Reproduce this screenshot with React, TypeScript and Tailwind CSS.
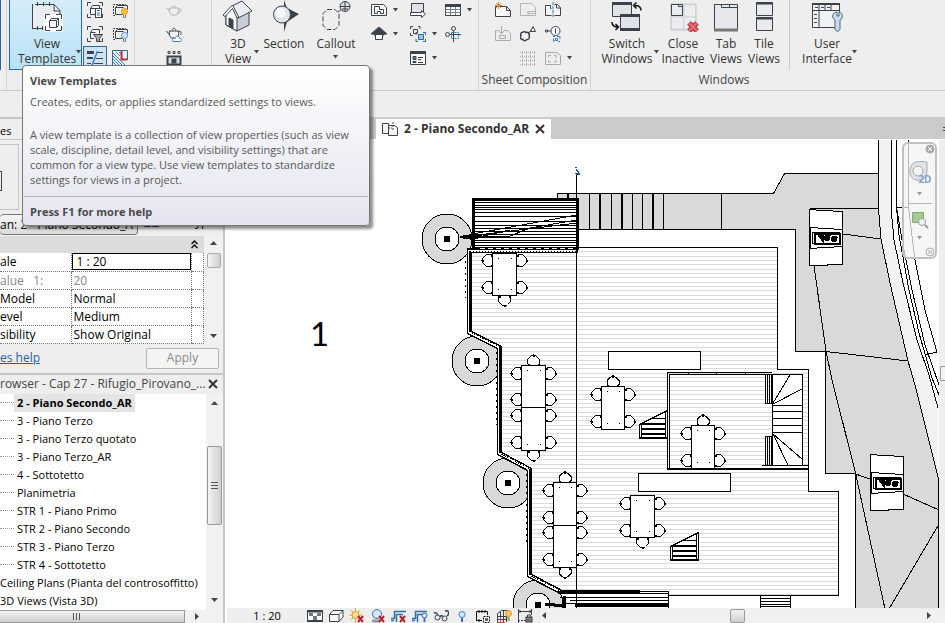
import type { ReactNode } from "react";

const INK = "#3b424c";

type IconProps = { children: ReactNode; size?: number };

function Icon({ children, size = 16 }: IconProps) {
  return (
    <svg width={size} height={size} viewBox={`0 0 ${size} ${size}`} fill="none" stroke={INK} className="shrink-0" aria-hidden="true">
      {children}
    </svg>
  );
}

function Arrow({ className = "", color = "#444" }: { className?: string; color?: string }) {
  return (
    <svg width="5" height="4" viewBox="0 0 5 4" className={`shrink-0 ${className}`} aria-hidden="true">
      <path d="M0 0h5L2.500 3.500z" fill={color} />
    </svg>
  );
}

/* ---------- ribbon icons ---------- */

const frame = <path d="M.5 4V.5H4M12 .5h3.500V4M15.500 12v3.500H12M4 15.500H.5V12" />;

const icons = {
  visibility: (
    <Icon>
      {frame}
      <path d="M8 12.500H3.500v-6l2-3h7v3M3.500 6.500h5" fill="#f4f4f4" />
      <rect x="8.500" y="6.500" width="6" height="9" fill="#fff" />
      <path d="M10 8.500h3M10 11h3M10 13h3" stroke="#2b6a9b" />
    </Icon>
  ),
  bulbOn: (
    <Icon>
      <path d="M3 13.500H1.500V2.500h12V5" strokeDasharray="2 1" />
      <path d="M3.500 12.500V5.500l2-2h10v4M3.500 5.500h8M3.500 12.500h7" fill="#f2f2f2" />
      <circle cx="12.500" cy="9.500" r="3" fill="#fbbf3c" stroke="#e19a23" />
      <path d="M11.500 13v3h2v-3" stroke="#8a7350" />
    </Icon>
  ),
  filter: (
    <Icon>
      {frame}
      <path d="M7 12.500H3.500v-6l2-3h7v4M3.500 6.500h5" fill="#f4f4f4" />
      <path d="M6.500 8.500h9l-3 4v3h-3v-3z" fill="#aaa" />
    </Icon>
  ),
  bulbOff: (
    <Icon>
      <path d="M3 13.500H1.500V2.500h12V5" strokeDasharray="2 1" />
      <path d="M3.500 12.500V5.500l2-2h10v4M3.500 5.500h8M3.500 12.500h7" fill="#f2f2f2" />
      <circle cx="12.500" cy="9.500" r="3" fill="#cfe6fa" stroke="#5c92c2" />
      <path d="M11.500 13v3h2v-3" stroke="#6b7c8c" />
    </Icon>
  ),
  thinLines: (
    <Icon>
      <path d="M0 2.500h7" strokeWidth="3" />
      <path d="M0 8h6" strokeWidth="2" />
      <path d="M0 13.500h4M10 2.500h6M9 8.500h7M7 13.500h9" />
      <path d="M10.500 1 5 15.500" stroke="#2f7fd0" strokeWidth="1.500" />
    </Icon>
  ),
  hidden: (
    <Icon>
      <path d="M.5 15.500V.5H15.500V10" stroke="#2c6797" />
      <path d="m1 3 12 12M1 6l9 9M1 9l6 6M1 12l3 3M4 2l4 4M7 2l2 2" stroke="#3282c8" />
      <path d="M9.500 1v8.500H15" stroke="#b53040" strokeWidth="2" />
    </Icon>
  ),
  teapot: (
    <Icon>
      <path d="M3.500 6h9c1 4-1 6-2 7h-5c-1-1-3-3-2-7zM3.500 8 .5 6M12.500 8c4-3 3 3-1 3M6 5.500c1-2 3-2 4 0" stroke="#b0b0b0" />
    </Icon>
  ),
  teapotCloud: (
    <Icon>
      <path d="M3.500 5h9c1 4-1 6-2 7h-5c-1-1-3-3-2-7zM3.500 9 .5 5M12.500 6c3-2 3 1 2 3M6 4.500c1-3 3-3 4 0" fill="#f4f4f4" />
      <path d="M7 15.500c-2-3 1-4 2-3 1-4 5-2 4.500 0 3 0 2 3 1 3z" fill="#fff" stroke="#4276b0" />
    </Icon>
  ),
  gallery: (
    <Icon>
      <path d="M2 1.500h2v2H2zM7 1.500h2v2H7zM12 1.500h2v2h-2z" />
      <path d="M1.500 6.500h13v8h-13z" fill="#d8dadd" strokeWidth="2" />
      <rect x="6" y="9" width="4" height="4" fill="#3b424c" />
    </Icon>
  ),
  planViews: (
    <Icon>
      <path d="M.5 2.500h12l3 3v8H.5z" fill="#fafafa" />
      <path d="M3.500 4.500h5v3h4v4h-3v-2h-3v2h-3z" />
    </Icon>
  ),
  elevation: (
    <Icon>
      <path d="M8 1 0 8h3v1h10V8h3z" fill={INK} />
      <path d="M4.500 8.500h7v5h-7z" fill="#f4f4f4" />
    </Icon>
  ),
  drafting: (
    <Icon>
      <path d="M1.500 1.500h12v9h-12z" fill="#dfe2e7" />
      <path d="M.5 10.500h11v-2l4 3.500-4 3.500v-2H.5z" fill="#fff" />
    </Icon>
  ),
  duplicate: (
    <Icon>
      <path d="M.5 3V.5H3M8 .5h2V3M.5 7v2.500H3" />
      <path d="M3.500 3.500h4v4h-4z" />
      <path d="M6 9V6.500h2M13 6.500h2.500V9M15.500 13v2.500H13M8 15.500H6V13" stroke="#2c6797" />
      <path d="M8.500 8.500h5v5h-5z" fill="#8fc8f2" stroke="#2c6797" />
    </Icon>
  ),
  legend: (
    <Icon>
      <path d="M.5 1.500h15v13H.5z" fill="#f7f7f7" />
      <path d="M.5 2.500h15" strokeWidth="3" />
      <path d="M3 6.500h3v3H3zM3 11.500h3v1H3z" fill="#71808e" />
      <path d="M8 7.500h5M8 9.500h3M8 12.500h5" />
    </Icon>
  ),
  schedule: (
    <Icon>
      <path d="M.5 2.500h15v11H.5z" fill="#fff" />
      <path d="M0 3.500h16" strokeWidth="3" />
      <path d="M.5 7.500h15M.5 10.500h15M5.500 5v8M10.500 5v8" stroke="#78828e" />
    </Icon>
  ),
  scopeBox: (
    <Icon>
      <circle cx="8.500" cy="2.500" r="2" />
      <circle cx="2.500" cy="8.500" r="2" />
      <path d="M5 8.500h11M8.500 5v11" />
      <path d="M6.500 6.500h7v6h-7z" stroke="#2f7fc0" strokeDasharray="2 1" />
    </Icon>
  ),
  sheet: (
    <Icon>
      <path d="M.5 14.500v-10h11l4 4v6z" fill="#f7f7f7" />
      <path d="M11.500 4.500v4h4" />
      <path d="M3.500 0v7M0 3.500h7M1 1l5 5M6 1 1 6" stroke="#e08a2c" />
    </Icon>
  ),
  titleBlock: (
    <Icon>
      <path d="M.5 13.500v-12h11l4 4v8zM8 9.500h7M8 11.500h7M8 9v4" stroke="#b4b4b4" />
    </Icon>
  ),
  matchline: (
    <Icon>
      <path d="M6.500 13.500h-6v-10h5v3h1M9.500 13.500h6v-8l-3-3h-3" fill="#f7f7f7" />
      <path d="M11.500 3v3h4" />
      <path d="M8 0v16" stroke="#2f7fc0" strokeDasharray="3 1" />
    </Icon>
  ),
  view: (
    <Icon>
      <path d="M4 4.500H.5v10h15v-7l-3-3H9M6.500 0v7M4 5l2.500 3L9 5M4.500 9.500h6v3h-6z" stroke="#acacac" />
    </Icon>
  ),
  revisions: (
    <Icon>
      <path d="M2 6.500c2-1 3-1 4 0 2-1 4 1 3 3 1 2 0 4-2 4-2 2-4 1-4 0-3 0-3-3-2-4-1-1 0-3 1-3z" fill="#f4f4f4" strokeWidth="1.500" />
      <path d="m8 8 3-4M10.500 5.500 13 .5l2.500 5z" />
    </Icon>
  ),
  viewReference: (
    <Icon>
      <circle cx="10.500" cy="5" r="4.500" fill="#fff" />
      <path d="M10.500 2.500v5M5.500 5H3M.5 4h2v2h-2z" />
      <path d="M8 10.500h2M12 10.500h3V13M8.500 12.500V15H10M13 15.500h2M10.500 12.500h2v2h-2z" stroke="#2f7fc0" />
    </Icon>
  ),
  guideGrid: (
    <Icon>
      <path d="M0 2.500h16M0 6.500h16M0 10.500h16M0 14.500h16M2.500 1v15M6.500 1v15M10.500 1v15M14.500 1v15" stroke="#b0b0b0" strokeDasharray="1 1" />
    </Icon>
  ),
  viewports: (
    <Icon>
      <path d="M.5 14.500v-12h11l4 3v9zM3.500 7V5.500H6M9 5.500h2V8M11 10v2H9M6 12H3.500v-2" stroke="#a8a8a8" />
    </Icon>
  ),
};

const bigIcons = {
  template: (
    <Icon size={32}>
      <path d="M2 4.500h21l6 6V29H2z" fill="#e9ecf1" stroke="none" />
      <path d="M1.500 4v24.500M4 4.500h19l6 6V16M23 4.500V11h6M1 28.500h11M6.500 2v4M12.500 2v4M18.500 2v4M6.500 26v4M11.500 26v4" />
      <rect x="13" y="14" width="19" height="18" fill="#fff" stroke="none" />
      <path d="M14.500 19v-4.500H19M25 14.500h5.500V19M30.500 26v4.500H25M19 30.500h-4.500V26" />
      <path d="M18.500 27.500v-7l2-2h7v7l-2 2zM18.500 20.500h7v7M25.500 20.500l2-2" fill="#f4f4f4" />
    </Icon>
  ),
  house: (
    <Icon size={32}>
      <path d="M4 14v11l11 6 12-6V13L18 4z" fill="#c9ced6" />
      <path d="m4 14 6-8 5 10v15L4 25z" fill="#fafafa" />
      <path d="M10 6 20 1l10 10-14 7z" fill="#e9ecf0" />
      <path d="M10.500 5 1 15l2 1.500 7.500-8 4.500 9.500 2-.5z" fill="#fff" />
      <path d="M7 18v8.500l4 2V20z" fill={INK} />
    </Icon>
  ),
  section: (
    <Icon size={32}>
      <path d="M16 0v32l3-10 12-8L19 8z" fill={INK} stroke="none" />
      <circle cx="14" cy="14.500" r="8.500" fill="#e0e3e8" />
      <circle cx="12.500" cy="13" r="5" fill="#f7f8fa" stroke="none" />
    </Icon>
  ),
  callout: (
    <Icon size={32}>
      <path d="M7 9.500h8l4 4v12l-4 4H7l-4-4v-12z" strokeDasharray="5 2" />
      <path d="m18 12 4-3" />
      <circle cx="25" cy="6.500" r="5" fill="#ddd" />
      <path d="M20 6.500h10M25 2v9M22 9h6" />
    </Icon>
  ),
  switchWindows: (
    <Icon size={32}>
      <path d="M1.500 2.500h19v14h-19z" fill="#e0e4e9" />
      <path d="M1 3.500h20" strokeWidth="3" />
      <path d="M9.500 14.500h19v15h-19z" fill="#e0e4e9" />
      <path d="M9 15.500h20M9 29.500h20" strokeWidth="3" />
      <path d="M30 10.500c0-4-2-5-6-5M25.500 2.500 22.500 5.500l3 3M1 22c0 4 2 5 6 5M4.500 24l3 3-3 3" stroke="#111" strokeWidth="1.500" />
    </Icon>
  ),
  closeInactive: (
    <Icon size={32}>
      <path d="M4 4h25v26H4z" fill="#d9dce1" stroke="#c3c6cb" />
      <path d="M6 18.500h9v9H6zM18.500 6h9v9h-9zM18.500 18.500h9v9h-9z" fill="#e9ebee" stroke="#f4f4f4" />
      <path d="M4.500 4.500h11v11h-11z" fill="#e9ebee" />
      <path d="M11.500 4.500v2h4" />
      <path d="m22 23 8 8M30 23l-8 8" stroke="#963038" strokeWidth="5" />
      <path d="m22 23 8 8M30 23l-8 8" stroke="#f0666a" strokeWidth="3" />
    </Icon>
  ),
  tabViews: (
    <Icon size={32}>
      <path d="M4.500 4.500h23v26h-23z" fill="#e6e8ed" />
      <path d="M4 30h24" strokeWidth="3" stroke="#777" />
      <path d="M11.500 4v3.500h16M19.500 4v3" />
    </Icon>
  ),
  tileViews: (
    <Icon size={32}>
      <path d="M8.500 2.500h16v13h-16zM8.500 17.500h16v13h-16z" fill="#e9ebef" />
      <path d="M8 3.500h17M8 18.500h17" strokeWidth="2" />
    </Icon>
  ),
  userInterface: (
    <Icon size={32}>
      <path d="M1.500 3.500h27v24h-27z" fill="#f1f2f5" />
      <path d="M1 4h28" strokeWidth="2" />
      <path d="M2 10.500h26M2 27.500h27M8 5v22M14 5v5M20 5v5M4 7.500h3M10 7.500h3M16 7.500h3M3 14.500h3M3 18.500h3M3 22.500h3" />
      <path d="M26 14v-2c-4 0-5 4-4 6l2 2v9c1 3 4 3 5 0v-9l2-2c1-2 0-6-3-6v4h-2z" fill="#c8dcee" stroke="#4e6478" />
    </Icon>
  ),
};

type Tool = { label: string; icon: keyof typeof icons; menu?: boolean; active?: boolean };

function SmallTool({ label, icon, menu, active }: Tool) {
  return (
    <button
      type="button"
      aria-label={label}
      className={`flex h-6 items-center gap-1.5 ${
        active ? "w-6 justify-center border border-[#2c6797] bg-[#cce4f5]" : "px-1"
      }`}
    >
      {icons[icon]}
      {menu && <Arrow />}
    </button>
  );
}

type BigToolProps = {
  lines: string[];
  icon: keyof typeof bigIcons;
  width: string;
  side?: boolean;
  below?: boolean;
};

function BigTool({ lines, icon, width, side, below }: BigToolProps) {
  return (
    <button type="button" className="flex h-[70px] shrink-0 text-[12px] leading-[15px] text-[#333]">
      <span className={`flex flex-col items-center ${width}`}>
        {bigIcons[icon]}
        <span className="mt-1 flex flex-col items-center whitespace-nowrap">
          {lines.map((line) => (
            <span key={line}>{line}</span>
          ))}
          {below && <Arrow className="mt-1" />}
        </span>
      </span>
      {side && <Arrow className="mt-[50px]" />}
    </button>
  );
}

const graphicsTools: Tool[] = [
  { label: "Visibility/Graphics", icon: "visibility" },
  { label: "Show Hidden Lines", icon: "bulbOn" },
  { label: "Filters", icon: "filter" },
  { label: "Remove Hidden Lines", icon: "bulbOff" },
  { label: "Thin Lines", icon: "thinLines", active: true },
  { label: "Cut Profile", icon: "hidden" },
];

const renderTools: Tool[] = [
  { label: "Render", icon: "teapot" },
  { label: "Render in Cloud", icon: "teapotCloud" },
  { label: "Render Gallery", icon: "gallery" },
];

const createTools: Tool[][] = [
  [
    { label: "Plan Views", icon: "planViews", menu: true },
    { label: "Elevation", icon: "elevation", menu: true },
  ],
  [
    { label: "Drafting View", icon: "drafting" },
    { label: "Duplicate View", icon: "duplicate", menu: true },
    { label: "Legends", icon: "legend", menu: true },
  ],
  [
    { label: "Schedules", icon: "schedule", menu: true },
    { label: "Scope Box", icon: "scopeBox" },
  ],
];

const sheetTools: Tool[][] = [
  [
    { label: "Sheet", icon: "sheet" },
    { label: "View", icon: "view" },
  ],
  [
    { label: "Title Block", icon: "titleBlock" },
    { label: "Revisions", icon: "revisions" },
    { label: "Guide Grid", icon: "guideGrid" },
  ],
  [
    { label: "Matchline", icon: "matchline" },
    { label: "View Reference", icon: "viewReference" },
    { label: "Viewports", icon: "viewports", menu: true },
  ],
];

function Ribbon() {
  return (
    <header className="flex h-[91px] shrink-0 overflow-hidden border-b border-[#cbcbcb] bg-[#eeeeee]">
      <div className="w-[7px] shrink-0 border-r border-[#d6d6d6]">
        <div className="h-[70px] w-px bg-[#2c6797]" />
      </div>
      <div className="flex w-[128px] shrink-0 border-r border-[#d6d6d6] pl-0.5">
        <div className="mr-px flex h-[70px] w-[73px] shrink-0 border border-t-0 border-[#2c6797] bg-linear-to-b from-[#d5edf9] to-[#b9e2f6]">
          <BigTool lines={["View", "Templates"]} icon="template" width="w-[66px] pl-2" side />
        </div>
        <div className="-mt-0.5 grid h-[72px] grid-cols-2 gap-x-px">
          {graphicsTools.map((tool) => (
            <SmallTool key={tool.label} {...tool} />
          ))}
        </div>
      </div>
      <div className="w-[77px] shrink-0 border-r border-[#d6d6d6] pl-[27px]">
        <div className="-mt-0.5">
          {renderTools.map((tool) => (
            <SmallTool key={tool.label} {...tool} />
          ))}
        </div>
      </div>
      <div className="flex w-[267px] shrink-0 border-r border-[#d6d6d6] pl-2.5">
        <BigTool lines={["3D", "View"]} icon="house" width="w-8" side />
        <BigTool lines={["Section"]} icon="section" width="w-[50px]" />
        <BigTool lines={["Callout"]} icon="callout" width="w-[54px]" below />
        <div className="-mt-0.5 ml-1 grid grid-cols-[39px_35px_35px] items-start">
          {createTools.map((column) => (
            <div key={column[0].label}>
              {column.map((tool) => (
                <SmallTool key={tool.label} {...tool} />
              ))}
            </div>
          ))}
        </div>
      </div>
      <div className="flex w-[112px] shrink-0 flex-col items-center border-r border-[#d6d6d6]">
        <div className="-mt-0.5 grid h-[74px] w-[88px] grid-cols-[25px_25px_38px] items-start">
          {sheetTools.map((column) => (
            <div key={column[0].label}>
              {column.map((tool) => (
                <SmallTool key={tool.label} {...tool} />
              ))}
            </div>
          ))}
        </div>
        <span className="whitespace-nowrap text-[12px] leading-4 text-[#444]">Sheet Composition</span>
      </div>
      <div className="flex shrink-0 flex-col items-center">
        <div className="flex h-[72px] pl-[9px]">
          <BigTool lines={["Switch", "Windows"]} icon="switchWindows" width="w-[54px]" side />
          <BigTool lines={["Close", "Inactive"]} icon="closeInactive" width="w-12" />
          <BigTool lines={["Tab", "Views"]} icon="tabViews" width="w-[38px]" />
          <BigTool lines={["Tile", "Views"]} icon="tileViews" width="w-[38px]" />
          <div className="mx-1.5 h-[70px] border-l border-[#cbcbcb]" />
          <div className="pl-1.5">
            <BigTool lines={["User", "Interface"]} icon="userInterface" width="w-[50px]" side />
          </div>
        </div>
        <span className="text-[12px] leading-4 text-[#444]">Windows</span>
      </div>
    </header>
  );
}

function Tooltip() {
  return (
    <div
      role="tooltip"
      className="absolute left-[22px] top-[65px] z-20 w-[348px] rounded-sm border border-[#767676] bg-linear-to-b from-white to-[#e4e5f0] text-[11px] leading-[15px] text-[#575757] shadow-[3px_3px_3px_rgba(0,0,0,0.45)]"
    >
      <div className="px-[7px] pt-[7px]">
        <p className="font-bold text-[#4a4a4a]">View Templates</p>
        <p className="mt-1.5">Creates, edits, or applies standardized settings to views.</p>
        <p className="mt-[18px] whitespace-nowrap">
          A view template is a collection of view properties (such as view
          <br />
          scale, discipline, detail level, and visibility settings) that are
          <br />
          common for a view type. Use view templates to standardize
          <br />
          settings for views in a project.
        </p>
      </div>
      <p className="mx-px mt-[9px] border-t border-[#b5b5bb] px-1.5 pb-[6px] pt-[7px] font-bold text-[#4a4a4a]">
        Press F1 for more help
      </p>
    </div>
  );
}

/* ---------- sidebar ---------- */

const properties = [
  { name: "ale", value: "1 : 20", editing: true },
  { name: "alue   1:", value: "20", muted: true },
  { name: "Model", value: "Normal" },
  { name: "evel", value: "Medium" },
  { name: "sibility", value: "Show Original" },
];

const views = [
  "2 - Piano Secondo_AR",
  "3 - Piano Terzo",
  "3 - Piano Terzo quotato",
  "3 - Piano Terzo_AR",
  "4 - Sottotetto",
  "Planimetria",
  "STR 1 - Piano Primo",
  "STR 2 - Piano Secondo",
  "STR 3 - Piano Terzo",
  "STR 4 - Sottotetto",
];

function Caret({ dir }: { dir: "up" | "down" | "left" | "right" }) {
  const paths = {
    up: "M0 5h7L3.500 1z",
    down: "M0 1h7L3.500 5z",
    left: "M5 0v7L1 3.500z",
    right: "M1 0v7l4-3.500z",
  };
  return (
    <svg width="7" height="7" viewBox="0 0 7 7" className="shrink-0" aria-hidden="true">
      <path d={paths[dir]} fill="#444" />
    </svg>
  );
}

function CloseX() {
  return (
    <svg width="10" height="10" viewBox="0 0 10 10" aria-hidden="true">
      <path d="m1 1 8 8M9 1 1 9" stroke="#333" strokeWidth="2" />
    </svg>
  );
}

function Properties() {
  return (
    <section className="shrink-0 border-b-2 border-[#c6c6c6]">
      <h2 className="h-[22px] border-t-2 border-[#c6c6c6] pt-1 text-[11px] leading-[15px]">es</h2>
      <div className="flex h-[75px] border-t border-[#c6c6c6] pr-[204px] pt-1">
        <div className="flex h-[66px] flex-1 items-center border border-l-0 border-[#c6c6c6]">
          <div className="mt-2 h-5 w-0.5 border border-l-0 border-[#444]" />
        </div>
      </div>
      <div className="flex h-[22px] items-start text-[12px] leading-4">
        <button type="button" className="flex h-[21px] w-[138px] items-center overflow-hidden whitespace-nowrap rounded-sm border border-l-0 border-[#777] bg-linear-to-b from-[#f4f4f4] to-[#dcdcdc]">
          an: 2 - Piano Secondo_A
        </button>
        <button type="button" className="ml-1.5 flex items-start gap-1 whitespace-nowrap">
          <Icon>
            <path d="M.5 3.500h6v9h-6zM8.500 6.500h6v6h-6z" fill="#fff" />
          </Icon>
          Edit Type
        </button>
      </div>
      <div className="flex">
        <div className="flex-1">
          <div className="flex h-[17px] items-center justify-end bg-[#dcdcdc] pr-1.5">
            <svg width="7" height="9" viewBox="0 0 7 9" fill="none" stroke="#111" strokeWidth="1.500" aria-hidden="true">
              <path d="m.5 4 3-3 3 3M.5 8l3-3 3 3" />
            </svg>
          </div>
          <table className="w-full table-fixed border-collapse bg-white text-[12px] leading-[17px]">
            <tbody>
              {properties.map((row) => (
                <tr key={row.name} className={`h-[18px] ${row.muted ? "text-[#888]" : "text-black"}`}>
                  <th scope="row" className="w-[71px] overflow-hidden whitespace-pre border-b border-r border-dotted border-[#777] p-0 text-left font-normal">
                    {row.name}
                  </th>
                  <td className="whitespace-nowrap border-b border-dotted border-[#777] p-0">
                    {row.editing ? (
                      <input aria-label="View scale" defaultValue={row.value} className="block h-[17px] w-full border border-black bg-white pl-1 outline-none" />
                    ) : (
                      <span className="pl-0.5">{row.value}</span>
                    )}
                  </td>
                  <td className="w-3 border-x border-b border-dotted border-[#777] p-0" />
                </tr>
              ))}
            </tbody>
          </table>
        </div>
        <div className="flex w-[19px] flex-col items-center bg-[#f1f1f1] py-1">
          <Caret dir="up" />
          <div className="mt-1.5 h-[15px] w-[14px] rounded-xs border border-[#aaa] bg-linear-to-r from-[#f4f4f4] to-[#cfcfcf]" />
          <div className="flex-1" />
          <Caret dir="down" />
        </div>
      </div>
      <div className="flex h-[29px] items-center justify-between pr-1 text-[12px]">
        <a href="#help" className="text-[#2560a8] underline">
          es help
        </a>
        <button type="button" className="h-[21px] w-[73px] rounded-xs border border-[#b4b4b4] bg-[#f4f4f4] text-[#8b8b8b]">
          Apply
        </button>
      </div>
    </section>
  );
}

function ProjectBrowser() {
  return (
    <section className="flex min-h-0 flex-1 flex-col">
      <div className="flex h-[19px] shrink-0 items-center justify-between pr-[5px] text-[12px] text-[#444]">
        <h2 className="whitespace-nowrap">rowser - Cap 27 - Rifugio_Pirovano_...</h2>
        <button type="button" aria-label="Close project browser">
          <CloseX />
        </button>
      </div>
      <div className="flex min-h-0 flex-1 bg-white">
        <ul className="w-[204px] overflow-hidden text-[11px] leading-[18px] text-black">
          {views.map((view, index) => (
            <li key={view} className="flex h-[18px] items-center whitespace-nowrap">
              <span className="w-3.5 border-t border-dotted border-[#999]" />
              <span className={index === 0 ? "bg-[#e4e4e4] px-[3px] font-bold" : "px-[3px]"}>{view}</span>
            </li>
          ))}
          <li className="h-[18px] whitespace-nowrap">Ceiling Plans (Pianta del controsoffitto)</li>
          <li className="h-[18px] whitespace-nowrap">3D Views (Vista 3D)</li>
        </ul>
        <div className="ml-auto flex w-[17px] flex-col items-center bg-[#f1f1f1] py-1.5">
          <Caret dir="up" />
          <div className="mt-[39px] flex h-[79px] w-[15px] flex-col items-center justify-center gap-0.5 rounded-xs border border-[#999] bg-linear-to-r from-[#f4f4f4] to-[#cfcfcf]">
            <span className="h-px w-[7px] bg-[#555]" />
            <span className="h-px w-[7px] bg-[#555]" />
            <span className="h-px w-[7px] bg-[#555]" />
          </div>
          <div className="flex-1" />
          <Caret dir="down" />
        </div>
      </div>
      <div className="flex h-[13px] shrink-0 items-center bg-[#f1f1f1]">
        <div className="flex h-full w-[185px] items-center justify-center gap-0.5 border border-l-0 border-[#999] bg-linear-to-b from-[#f4f4f4] to-[#cfcfcf] pr-8">
          <span className="h-[7px] w-px bg-[#555]" />
          <span className="h-[7px] w-px bg-[#555]" />
          <span className="h-[7px] w-px bg-[#555]" />
        </div>
        <span className="ml-[9px]">
          <Caret dir="right" />
        </span>
      </div>
    </section>
  );
}

/* ---------- drawing area ---------- */

type ChairProps = { x: number; y: number; turn: number };

function Chair({ x, y, turn }: ChairProps) {
  return (
    <g transform={`translate(${x} ${y}) rotate(${turn})`}>
      <path d="M6 -5 3 -6h-4l-3 3-2 3 2 3 3 3h4l3-2" fill="#fff" stroke="#000" />
      <path d="M-6 -1h2v2h-2zM3 -6h2v2H3zM3 4h2v2H3z" fill="#000" />
    </g>
  );
}

type TableProps = {
  x: number;
  y: number;
  w: number;
  rows: number[];
  h: number;
  split?: number;
  top?: boolean;
  bottom?: boolean;
};

function DiningTable({ x, y, w, h, rows, split, top, bottom }: TableProps) {
  return (
    <g>
      {rows.map((r) => (
        <g key={r}>
          <Chair x={x - 5} y={y + r} turn={0} />
          <Chair x={x + w + 5} y={y + r} turn={180} />
        </g>
      ))}
      {top && <Chair x={x + w / 2} y={y - 5} turn={90} />}
      {bottom && <Chair x={x + w / 2} y={y + h + 5} turn={270} />}
      <rect x={x} y={y} width={w} height={h} fill="#fff" stroke="#000" />
      {split && <path d={`M${x} ${y + split}h${w}`} stroke="#000" />}
      <path d={`M${x + 5} ${y + 5}h1M${x + w - 6} ${y + 5}h1M${x + 5} ${y + h - 6}h1M${x + w - 6} ${y + h - 6}h1`} stroke="#000" />
    </g>
  );
}

function Column({ x, y }: { x: number; y: number }) {
  return (
    <g>
      <circle cx={x} cy={y} r="25" fill="#d9d9d9" stroke="#000" />
      <circle cx={x} cy={y} r="12" fill="#fff" stroke="#000" />
      <rect x={x - 3} y={y - 3} width="6" height="6" fill="#000" />
    </g>
  );
}

function Barbecue({ x, y }: { x: number; y: number }) {
  return (
    <g transform={`translate(${x} ${y})`} stroke="#000">
      <path d="M.5 1.500 14 2.500 33.500 3.500V56.500H18v1H.5z" fill="#fff" />
      <path d="M.5 19.500 33 21.500M.5 40.500 33 38.500M2 41l12-2M1.500 20v20" />
      <path d="M3.500 24.500h27v11h-27z" fill="#fff" strokeWidth="1" />
      <path d="M5.500 25.500h25v10h-25z" strokeWidth="2" />
      <path d="M8 26h6v8z" fill="#000" />
      <circle cx="18" cy="30" r="2.500" fill="#000" />
      <circle cx="25" cy="31" r="2.500" fill="#000" />
      <path d="M14.500 25v10M20 27l2 1M27 28l2 2" />
    </g>
  );
}

function SmallStair({ x, y }: { x: number; y: number }) {
  return (
    <g transform={`translate(${x} ${y})`} stroke="#000">
      <path d="M.5 14.500 28.500.5v28H.5z" fill="#fff" />
      <path d="M2.500 13v15M26.500 2v26M14 8.500h13" />
      <path d="M2 13.500h25M2 18.500h25M2 23.500h25" />
      <path d="M2 14h25M2 19h25M2 24h25M1 28h27" strokeWidth="2" />
    </g>
  );
}

const FLOOR =
  "M470.500 249.500H577.500V247.500H777.500V369.500H808.500V491.500H838.500V595.500H668.500V591.500H560.500L530.500 575.500V469.500L500.500 453.500V347.500L470.500 333.500z";

const WALL = "M578 250H469.500V332.500L499.500 347.500V453.500L529.500 469.500V575.500L560 591.500";

function FloorPlan() {
  return (
    <svg
      viewBox="225 140 714 468"
      preserveAspectRatio="xMinYMin slice"
      className="h-full w-full"
      shapeRendering="crispEdges"
      fill="none"
      role="img"
      aria-label="Floor plan, 2 - Piano Secondo_AR"
    >
      <defs>
        <pattern id="deck" width="13" height="13" patternUnits="userSpaceOnUse">
          <path d="M0 .5h13M0 4.500h13M0 9.500h13" stroke="#d9d9d9" />
        </pattern>
      </defs>

      {/* terrain */}
      <path
        d="M557.500 193.500H773.500L784.500 173.500H878.500V208.500L881 239 890 283 908 361 915 385 938 477V609H855.500V473.500H825.500V351.500H795.500V229.500H557.500z"
        fill="#d9d9d9"
        stroke="#000"
      />
      <path d="M878.500 140V208L881 239 890 283 908 361 915 385 938 477V412L933 390 917 340 905 290 894 240 892 213V140z" fill="#f2f2f2" />
      <g stroke="#000">
        <path d="M568 193v36M600 193v36M621.500 193v36M653 193v36" strokeWidth="2" />
        <path d="M589.500 193v36M611.500 193v36M632.500 193v36M642.500 193v36M663.500 193v36M721.500 193v36" />
        <path d="M809.500 208.500H878.500V140M878.500 208 881 239 890 283 908 361 915 385 938 477" />
        <path d="M891.500 140V213L894 240 903 283 917 340 929 375 938 408" />
        <path d="M896.500 140V207L899 235 909 290 919 333 932 378 939 395" />
        <path d="M896.500 207 902 240 912 290 925 345 939 385" />
        <path d="M896.500 207.500H908.500V140M908.500 207 915 260 925 310 937 352 925 355" />
        <path d="M843 234 881 239M814 266 826 351 832 380 855.500 473 885 609M826 351.500 908 361" />
        <path d="M855.500 474 870 479M903 494 939 510M939 524 889 609" />
      </g>
      <Barbecue x={809} y={208} />
      <Barbecue x={870} y={453} />

      {/* columns */}
      <Column x={447} y={239} />
      <Column x={477} y={361} />
      <Column x={508} y={483} />
      <Column x={538} y={605} />

      {/* deck */}
      <path d={FLOOR} fill="#fff" />
      <path d={FLOOR} fill="url(#deck)" stroke="#000" />
      <path d={WALL} stroke="#000" strokeWidth="5" />
      <path d={WALL} stroke="#fff" transform="translate(-1 0)" />
      <path d="M471 251.500H577M470 332 500 347M500 453 530 469M530 575 560 591" stroke="#fff" strokeDasharray="2 1" />
      <path d="M465.500 255V298M496.500 352V425M526.500 474V545" stroke="#000" strokeDasharray="2 4" />

      {/* striped stair, top left */}
      <rect x="473" y="199" width="104" height="49" fill="#fff" stroke="#000" strokeWidth="3" />
      <path
        d="M474 202.500H577M474 205.500H577M474 207.500H577M474 209.500H577M474 212.500H577M474 216.500H577M474 221.500H577M474 225.500H577M474 228.500H577M474 231.500H577M474 234.500H577M474 237.500H577M474 240.500H577M474 242.500H577M474 245.500H577"
        stroke="#000"
      />
      <path d="M460 237 478 233 577 215M478 235 577 223M478 236 510 236 530 228 577 220M470 239 510 230" stroke="#000" />
      <path d="M460 237 474 235 482 236 474 239z" fill="#000" stroke="#000" strokeWidth="2" />
      <path d="M480 248H574" stroke="#fff" strokeDasharray="5 3" />
      <path d="M558 591H668.500V609M558 593.500H668M560 597.500H668M570 600.500H668M562 603.500H668" stroke="#000" />
      <path d="M560 591.500H640M575 605H668M545 604 564 606M564 596v12" stroke="#000" strokeWidth="3" />
      <path d="M760.500 595.500H790.500V609H760.500zM760 598.500h31M760 601.500h31M760 604.500h31M760 606.500h31" stroke="#000" />

      {/* stair room */}
      <rect x="608.500" y="351.500" width="92" height="18" fill="#fff" stroke="#000" />
      <rect x="638.500" y="473.500" width="92" height="18" fill="#fff" stroke="#000" />
      <SmallStair x={639} y={410} />
      <g stroke="#000">
        <path d="M772.500 374.500H802.500V465.500H772.500z" fill="#fff" />
        <path d="M667.500 469.500V372.500H772M669.500 468V374.500H802.500V465.500M688.500 372v2M716.500 372v2M745.500 372v2" />
        <path d="M667 469H808" strokeWidth="2" />
        <path d="M765.500 375v28M767.500 375v28M769.500 375v28M771.500 375v28M765 403.500h8M765.500 436v29M767.500 436v29M769.500 436v29M771.500 436v29M765 436.500h8M762 465.500h46" />
        <path d="M772.500 403v34M772 405.500h30M772 411.500h30M772 418.500h30M772 425.500h30M772 432.500h30" />
        <path d="M773 403 790 375M773 404 802 389M773 434 802 459M773 434 788 465" />
      </g>
      <SmallStair x={670} y={532} />

      <path d="M576.500 174V608" stroke="#000" />
      <path d="M575 167h2M576 169l3 4h-4M576 174h4" stroke="#1d4f8c" />

      <DiningTable x={492.500} y={253.500} w={24} h={42} rows={[7, 34]} bottom />
      <DiningTable x={521.500} y={365.500} w={24} h={85} rows={[8, 34, 50, 77]} split={42} top bottom />
      <DiningTable x={553.500} y={482.500} w={23} h={85} rows={[8, 35, 50, 77]} split={43} top bottom />
      <DiningTable x={601.500} y={386.500} w={23} h={43} rows={[8, 35]} top />
      <DiningTable x={630.500} y={495.500} w={24} h={42} rows={[8, 35]} bottom />
      <DiningTable x={691.500} y={425.500} w={23} h={43} rows={[8, 35]} top />

      <text x="310" y="346" fill="#000" className="font-[Lato,sans-serif] text-[33px]">
        1
      </text>
    </svg>
  );
}

function NavigationBar() {
  return (
    <div className="absolute right-0.5 top-0.5 flex h-[117px] w-[35px] flex-col items-center justify-between rounded-md border-2 border-[#c0c0c0] bg-[#f3f3f3]/75">
      <button type="button" aria-label="Close navigation bar" className="self-end">
        <svg width="10" height="10" viewBox="0 0 10 10" fill="#aaa" stroke="#aaa">
          <circle cx="5" cy="5" r="4" />
          <path d="m3 3 4 4M7 3 3 7" stroke="#fff" />
        </svg>
      </button>
      <button type="button" aria-label="Steering wheel" className="relative text-[10px] font-bold leading-3 text-[#7fa3cc]">
        <svg width="24" height="24" viewBox="0 0 24 24" fill="#e0e3e8" stroke="#a4a8ae">
          <path d="M3 5c3-5 9-5 16-4v8c0 9-6 11-11 10C3 18 0 11 3 5z" />
          <circle cx="10" cy="10" r="5" fill="#f3f3f3" />
        </svg>
        <span className="absolute bottom-0 right-0">2D</span>
      </button>
      <Arrow color="#999" />
      <div className="w-6 border-t border-[#b5b5b5]" />
      <button type="button" aria-label="Zoom in region">
        <svg width="18" height="18" viewBox="0 0 18 18" fill="none">
          <path d="M1.500 1.500h11v10h-11z" fill="#a5cc95" stroke="#84ab75" />
          <circle cx="11" cy="11" r="3.500" fill="#f3f3f3" stroke="#9a9a9a" />
          <path d="m14 14 3 3" stroke="#9a9a9a" strokeWidth="2" />
        </svg>
      </button>
      <Arrow color="#999" />
      <button type="button" aria-label="Customize navigation bar" className="self-end">
        <svg width="10" height="10" viewBox="0 0 10 10" fill="none" stroke="#aaa">
          <circle cx="5" cy="5" r="4" />
          <path d="M3 4h4M3 6h4" />
        </svg>
      </button>
    </div>
  );
}

const redX = <path d="m9 8 5 6M14 8l-5 6" stroke="#b3232b" strokeWidth="2" />;

const viewControls: { label: string; icon: ReactNode }[] = [
  {
    label: "Detail Level",
    icon: (
      <>
        <rect x=".5" y="2.500" width="15" height="11" fill="#fff" />
        <path d="M2 5h4v3H2zM10 5h4v3h-4zM6 8h4v4H6z" fill="#777" stroke="none" />
        <path d="M0 3.500h16M0 13h16" strokeWidth="2" />
      </>
    ),
  },
  {
    label: "Visual Style",
    icon: <path d="M1.500 6.500 5 2.500h10V9l-4 4.500H1.500zM1.500 6.500H11v7M11 6.500l4-4" fill="#fff" />,
  },
  {
    label: "Sun Path Off",
    icon: (
      <>
        <path d="M6.500 0v15M0 7h13M2 2l9 10M11 2 2 12" stroke="#e0a63a" />
        <circle cx="6.500" cy="7" r="3.500" fill="#fbe29a" stroke="#d99a2b" />
        {redX}
      </>
    ),
  },
  {
    label: "Shadows Off",
    icon: (
      <>
        <path d="M2 13h7" stroke="#999" strokeWidth="3" />
        <circle cx="7" cy="6" r="4.500" fill="#d5e7f6" stroke="#3672a8" />
        {redX}
      </>
    ),
  },
  {
    label: "Do Not Crop View",
    icon: (
      <>
        <path d="M0 10.500h3.500v-7H15M5.500 14V6.500H12M0 12.500h3" stroke="#2f6fa8" strokeWidth="1.500" />
        {redX}
      </>
    ),
  },
  {
    label: "Hide Crop Region",
    icon: (
      <>
        <path d="M0 10.500h3.500v-7H15M5.500 14V6.500H11M0 12.500h3" stroke="#2f6fa8" strokeWidth="1.500" />
        <circle cx="12.500" cy="7.500" r="2.500" fill="#d5e7f6" stroke="#3672a8" />
        <path d="M12.500 10v4" stroke="#3672a8" strokeWidth="2" />
      </>
    ),
  },
  {
    label: "Temporary Hide/Isolate",
    icon: (
      <>
        <path d="M1 5c2-1 3 0 4 3M7 9c1-2 2-2 3 0M14 8c3-2 2-6-2-5" strokeWidth="1.500" />
        <circle cx="4.500" cy="9.500" r="2.500" fill="#e6edf4" />
        <circle cx="11.500" cy="10.500" r="2.500" fill="#e6edf4" />
      </>
    ),
  },
  {
    label: "Reveal Hidden Elements",
    icon: (
      <>
        <circle cx="8" cy="6.500" r="3" fill="#cfe8fb" stroke="#3d86c6" />
        <path d="M8 10v4" stroke="#3672a8" strokeWidth="2" />
      </>
    ),
  },
  {
    label: "Temporary View Properties",
    icon: (
      <>
        <path d="M1.500 13V3.500h11V7M1.500 12.500H7M4 2v3M7 2v3M10 2v3M4 11v3" stroke="#111" />
        <rect x="8.500" y="8.500" width="6" height="6" fill="#fff" stroke="#111" strokeDasharray="2 1" />
        <rect x="10" y="10" width="3" height="3" fill="#666" stroke="none" />
      </>
    ),
  },
  {
    label: "Hide Analytical Model",
    icon: (
      <>
        <path d="M1.500 14V5.500l4-3h6M1 8.500h10M4.500 4v10M7.500 3v11M10.500 8v6M1 11.500h9" />
        <path d="M1 14.500h8M4.500 9v5" stroke="#c04b40" />
        <circle cx="12.500" cy="5.500" r="3" fill="#fbc55a" stroke="#d99a2b" />
        <path d="M12.500 9v4" stroke="#b98b4b" strokeWidth="2" />
      </>
    ),
  },
  {
    label: "Reveal Constraints",
    icon: (
      <>
        <path d="M1.500 1v14M14.500 1v6M1 3.500h14M3 2v3M13 2v3" />
        <path d="M1 12.500h8" strokeDasharray="2 1" />
        <rect x="9" y="9" width="6" height="5" fill="#777" />
        <path d="M10.500 9V7h3v2" />
      </>
    ),
  },
];

function ViewControlBar() {
  return (
    <footer className="ml-0.5 flex h-[15px] shrink-0 items-center overflow-hidden bg-[#eeeeee] text-[11px] leading-[15px] text-black">
      <button type="button" className="w-20 whitespace-nowrap text-center">
        1 : 20
      </button>
      <div className="flex gap-[5px]">
        {viewControls.map(({ label, icon }) => (
          <button key={label} type="button" aria-label={label} className="pt-px">
            <Icon>{icon}</Icon>
          </button>
        ))}
      </div>
      <div className="ml-2 flex flex-1 items-center bg-[#f1f1f1] pr-3">
        <Caret dir="left" />
        <div className="flex flex-1 justify-center">
          <div className="h-[14px] w-[15px] rounded-xs border border-[#999] bg-linear-to-b from-[#f4f4f4] to-[#cfcfcf]" />
        </div>
        <Caret dir="right" />
      </div>
    </footer>
  );
}

export default function App() {
  return (
    <div className="relative flex h-screen flex-col overflow-hidden bg-[#eeeeee] font-['Open_Sans','Noto_Sans',sans-serif]">
      <Ribbon />
      <div className="h-[26px] shrink-0" />
      <Tooltip />
      <div className="flex min-h-0 flex-1">
        <aside className="flex w-[225px] shrink-0 flex-col border-r-2 border-[#c6c6c6]">
          <Properties />
          <ProjectBrowser />
        </aside>
        <main className="flex min-w-0 flex-1 flex-col bg-white">
          <div className="flex h-[22px] shrink-0 items-end justify-between bg-[#cbcbcb] pl-[151px]">
            <div className="flex h-5 items-center gap-1.5 bg-white px-1.5 text-[12px] text-[#333]">
              <Icon>
                <path d="M6.500 12.500h-6v-10h6v2M6.500 4.500h6l3 2v8h-9z" fill="#f7f7f7" />
                <path d="M11 1v9M6 7h4" strokeDasharray="2 1" />
              </Icon>
              <span className="whitespace-nowrap font-bold">2 - Piano Secondo_AR</span>
              <button type="button" aria-label="Close view">
                <CloseX />
              </button>
            </div>
            <button type="button" aria-label="List open views" className="mb-2 h-1 w-0.5 border-y border-[#444]" />
          </div>
          <div className="flex min-h-0 flex-1 pt-px">
            <div className="relative min-w-0 flex-1">
              <FloorPlan />
              <NavigationBar />
            </div>
            <div className="flex w-1.5 flex-col bg-[#eeeeee] pt-[226px]">
              <div className="ml-px h-[15px] rounded-l-xs border border-r-0 border-[#999] bg-[#f4f4f4]" />
            </div>
          </div>
          <ViewControlBar />
        </main>
      </div>
    </div>
  );
}
